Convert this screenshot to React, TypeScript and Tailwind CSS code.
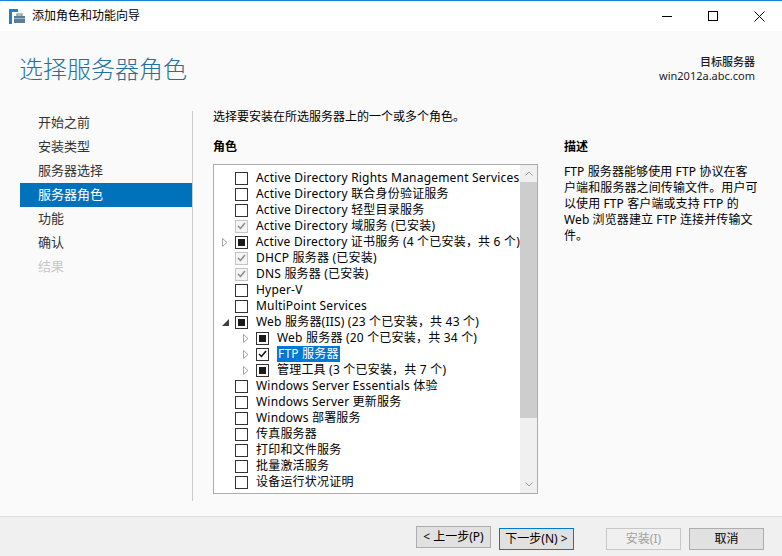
import React from 'react'

type RoleState = 'none' | 'installed' | 'mixed' | 'checked'

interface Role {
  label: string
  state: RoleState
  level?: number
  expander?: 'collapsed' | 'expanded'
  selected?: boolean
}

const roles: Role[] = [
  { label: 'Active Directory Rights Management Services', state: 'none' },
  { label: 'Active Directory 联合身份验证服务', state: 'none' },
  { label: 'Active Directory 轻型目录服务', state: 'none' },
  { label: 'Active Directory 域服务 (已安装)', state: 'installed' },
  { label: 'Active Directory 证书服务 (4 个已安装，共 6 个)', state: 'mixed', expander: 'collapsed' },
  { label: 'DHCP 服务器 (已安装)', state: 'installed' },
  { label: 'DNS 服务器 (已安装)', state: 'installed' },
  { label: 'Hyper-V', state: 'none' },
  { label: 'MultiPoint Services', state: 'none' },
  { label: 'Web 服务器(IIS) (23 个已安装，共 43 个)', state: 'mixed', expander: 'expanded' },
  { label: 'Web 服务器 (20 个已安装，共 34 个)', state: 'mixed', level: 1, expander: 'collapsed' },
  { label: 'FTP 服务器', state: 'checked', level: 1, expander: 'collapsed', selected: true },
  { label: '管理工具 (3 个已安装，共 7 个)', state: 'mixed', level: 1, expander: 'collapsed' },
  { label: 'Windows Server Essentials 体验', state: 'none' },
  { label: 'Windows Server 更新服务', state: 'none' },
  { label: 'Windows 部署服务', state: 'none' },
  { label: '传真服务器', state: 'none' },
  { label: '打印和文件服务', state: 'none' },
  { label: '批量激活服务', state: 'none' },
  { label: '设备运行状况证明', state: 'none' },
]

const steps = ['开始之前', '安装类型', '服务器选择', '服务器角色', '功能', '确认', '结果']

// description wraps exactly like the wizard does
const descLines = [
  'FTP 服务器能够使用 FTP 协议在客',
  '户端和服务器之间传输文件。用户可',
  '以使用 FTP 客户端或支持 FTP 的',
  'Web 浏览器建立 FTP 连接并传输文',
  '件。',
]

function CheckBox({ state }: { state: RoleState }) {
  if (state === 'installed') {
    return (
      <div className="w-[13px] h-[13px] border border-[#c4c4c4] bg-[#f4f4f4] flex items-center justify-center">
        <svg width="9" height="8" viewBox="0 0 9 8">
          <path d="M1 4 L3.5 6.5 L8 1" stroke="#8a8a8a" strokeWidth="1.5" fill="none" />
        </svg>
      </div>
    )
  }
  return (
    <div className="w-[13px] h-[13px] border border-[#333] bg-white flex items-center justify-center">
      {state === 'mixed' && <div className="w-[7px] h-[7px] bg-[#1a1a1a]" />}
      {state === 'checked' && (
        <svg width="9" height="8" viewBox="0 0 9 8">
          <path d="M1 4 L3.5 6.5 L8 1" stroke="#111" strokeWidth="1.5" fill="none" />
        </svg>
      )}
    </div>
  )
}

function Expander({ kind }: { kind?: 'collapsed' | 'expanded' }) {
  if (kind === 'collapsed') {
    return (
      <svg width="6" height="9" viewBox="0 0 6 9">
        <path d="M0.5 0.5 L5 4.5 L0.5 8.5 Z" fill="none" stroke="#a6a6a6" strokeWidth="1" />
      </svg>
    )
  }
  if (kind === 'expanded') {
    return (
      <svg width="7" height="7" viewBox="0 0 7 7">
        <path d="M7 0 L7 7 L0 7 Z" fill="#404040" />
      </svg>
    )
  }
  return <span className="w-[6px]" />
}

function Btn({ children, primary, disabled }: { children: React.ReactNode; primary?: boolean; disabled?: boolean }) {
  return (
    <button
      className={`w-[75px] h-[22px] text-[12px] leading-none border ${
        disabled
          ? 'border-[#c8c8c8] bg-[#f0f0f0] text-[#a0a0a0]'
          : primary
          ? 'border-[#0078d7] bg-[#e1e1e1] text-black'
          : 'border-[#adadad] bg-[#e1e1e1] text-black'
      }`}
    >
      {children}
    </button>
  )
}

export default function App() {
  return (
    <div className="w-[782px] h-[556px] flex flex-col bg-[#fafafa] text-black font-['Noto_Sans','Noto_Sans_CJK_SC',sans-serif] overflow-hidden">
      {/* title bar */}
      <div className="h-[31px] bg-white border-t border-[#1883d7] flex items-center">
        <svg className="ml-[8px]" width="18" height="16" viewBox="0 0 18 16">
          <rect x="1" y="1" width="9" height="3" fill="#1e7ed0" />
          <rect x="1" y="1" width="3" height="15" fill="#1e7ed0" />
          <rect x="6" y="8" width="11" height="7" fill="#5c7d96" />
          <rect x="9" y="6" width="5" height="2" fill="none" stroke="#5c7d96" strokeWidth="1" />
          <rect x="6" y="10" width="11" height="1" fill="#9fb7c8" />
        </svg>
        <span className="ml-[6px] text-[12px] leading-none">添加角色和功能向导</span>
        <div className="ml-auto flex items-center h-full">
          <div className="w-[46px] h-full flex items-center justify-center">
            <div className="w-[10px] h-px bg-black" />
          </div>
          <div className="w-[46px] h-full flex items-center justify-center">
            <div className="w-[10px] h-[10px] border border-black" />
          </div>
          <div className="w-[46px] h-full flex items-center justify-center">
            <svg width="11" height="11" viewBox="0 0 11 11">
              <path d="M0.5 0.5 L10.5 10.5 M10.5 0.5 L0.5 10.5" stroke="#000" strokeWidth="1" />
            </svg>
          </div>
        </div>
      </div>

      {/* header */}
      <div className="h-[69px] flex items-center justify-between pl-[19px] pr-[27px]">
        <h1 className="text-[24px] leading-none font-light text-[#1f70a3] mt-[6px]">选择服务器角色</h1>
        <div className="text-right text-[11px] leading-[14px] mt-[6px] text-[#1a1a1a]">
          <div className="font-medium">目标服务器</div>
          <div>win2012a.abc.com</div>
        </div>
      </div>

      {/* body */}
      <div className="flex-1 flex">
        <div className="w-[193px] pl-[20px] pt-[11px]">
          <div className="border-r border-[#cccccc] h-[390px]">
            {steps.map((s, i) => (
              <div
                key={s}
                className={`h-[24px] pl-[18px] flex items-center text-[13px] ${
                  i === 3 ? 'bg-[#0072bc] text-white' : i === 6 ? 'text-[#c8c8c8]' : 'text-[#333]'
                }`}
              >
                {s}
              </div>
            ))}
          </div>
        </div>

        <div className="flex-1 pl-[20px] pt-[9px] flex flex-col">
          <div className="text-[12px] leading-[16px]">选择要安装在所选服务器上的一个或多个角色。</div>
          <div className="flex mt-[14px]">
            <div className="w-[325px]">
              <div className="text-[12px] leading-[16px] font-bold">角色</div>
              <div className="mt-[9px] h-[330px] border border-[#acacac] bg-white flex">
                <div className="flex-1 pt-[5px] overflow-hidden tracking-[0.2px]">
                  {roles.map((r) => (
                    <div
                      key={r.label}
                      className={`h-[16px] flex items-center whitespace-nowrap ${r.level ? 'pl-[29px]' : 'pl-[8px]'}`}
                    >
                      <div className="w-[8px] flex items-center">
                        <Expander kind={r.expander} />
                      </div>
                      <div className="ml-[5px]">
                        <CheckBox state={r.state} />
                      </div>
                      <span
                        className={`ml-[8px] text-[12px] leading-[16px] ${
                          r.selected ? 'bg-[#0078d7] text-white px-[1px] -ml-[1px]' : ''
                        }`}
                      >
                        {r.label}
                      </span>
                    </div>
                  ))}
                </div>
                <div className="w-[17px] bg-[#f0f0f0] flex flex-col">
                  <div className="h-[17px] flex items-center justify-center">
                    <svg width="8" height="5" viewBox="0 0 8 5">
                      <path d="M0.5 4.5 L4 1 L7.5 4.5" stroke="#a0a0a0" fill="none" />
                    </svg>
                  </div>
                  <div className="h-[236px] bg-[#cdcdcd]" />
                  <div className="flex-1" />
                  <div className="h-[17px] flex items-center justify-center">
                    <svg width="8" height="5" viewBox="0 0 8 5">
                      <path d="M0.5 0.5 L4 4 L7.5 0.5" stroke="#a0a0a0" fill="none" />
                    </svg>
                  </div>
                </div>
              </div>
            </div>
            <div className="ml-[26px] w-[200px]">
              <div className="text-[12px] leading-[16px] font-bold">描述</div>
              <div className="mt-[9px] text-[12px] leading-[16px] tracking-[0.1px]">
                {descLines.map((l) => (
                  <div key={l} className="whitespace-nowrap">{l}</div>
                ))}
              </div>
            </div>
          </div>
        </div>
      </div>

      {/* footer */}
      <div className="h-[40px] border-t border-[#dfdfdf] bg-[#f0f0f0] flex items-center pr-[18px] pt-[1px]">
        <div className="ml-auto flex items-center">
          <Btn>&lt; 上一步(P)</Btn>
          <div className="ml-[8px]">
            <Btn primary>下一步(N) &gt;</Btn>
          </div>
          <div className="ml-[32px]">
            <Btn disabled>安装(I)</Btn>
          </div>
          <div className="ml-[8px]">
            <Btn>取消</Btn>
          </div>
        </div>
      </div>
    </div>
  )
}
